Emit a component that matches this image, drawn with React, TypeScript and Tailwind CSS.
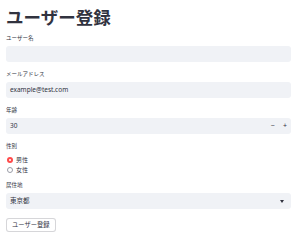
import React from "react";

const font = { fontFamily: '"Noto Sans", "Noto Sans CJK JP", sans-serif' };

function Label({ children }: { children: React.ReactNode }) {
  return <div className="h-[8px] text-[5.5px] leading-[8px] text-[#31333f]">{children}</div>;
}

export default function App() {
  return (
    <div className="w-[300px] h-[240px] bg-white pl-[6px] pr-[9px] pt-[5px] text-[#31333f]" style={font}>
      <h1 className="text-[17.5px] font-bold leading-[24px] text-[#31333f]">ユーザー登録</h1>
      <div className="mt-[5px]">
        <Label>ユーザー名</Label>
        <div className="mt-[4px] h-[16px] rounded-[3px] bg-[#f0f2f6]" />
      </div>
      <div className="mt-[8px]">
        <Label>メールアドレス</Label>
        <div className="mt-[4px] h-[16px] rounded-[3px] bg-[#f0f2f6] flex items-center px-[4px] text-[6.5px]">example@test.com</div>
      </div>
      <div className="mt-[8px]">
        <Label>年齢</Label>
        <div className="mt-[4px] h-[16px] rounded-[3px] bg-[#f0f2f6] flex items-center pl-[4px] text-[6.5px]">
          <span className="flex-1">30</span>
          <span className="w-[12px] text-center text-[7px]">−</span>
          <span className="w-[12px] text-center text-[7px]">+</span>
        </div>
      </div>
      <div className="mt-[8px]">
        <Label>性別</Label>
        <div className="mt-[5px] flex flex-col">
          <div className="h-[10px] flex items-center gap-[3px] pl-[1px]">
            <span className="w-[6px] h-[6px] rounded-full bg-[#ff4b4b] flex items-center justify-center">
              <span className="w-[2.5px] h-[2.5px] rounded-full bg-white" />
            </span>
            <span className="text-[6px]">男性</span>
          </div>
          <div className="h-[10px] flex items-center gap-[3px] pl-[1px]">
            <span className="w-[6px] h-[6px] rounded-full border-[0.7px] border-[#9a9ca6] bg-white" />
            <span className="text-[6px]">女性</span>
          </div>
        </div>
      </div>
      <div className="mt-[6px]">
        <Label>居住地</Label>
        <div className="mt-[4px] h-[16px] rounded-[3px] bg-[#f0f2f6] flex items-center px-[4px] text-[6.5px]">
          <span className="flex-1">東京都</span>
          <svg width="4" height="3" viewBox="0 0 4 3" className="mr-[3px]">
            <path d="M0 0 L4 0 L2 3 Z" fill="#31333f" />
          </svg>
        </div>
      </div>
      <button className="mt-[7px] h-[14px] px-[5px] rounded-[3px] border border-[rgba(49,51,63,0.2)] bg-white text-[6.3px] leading-[12px] text-[#31333f]">
        ユーザー登録
      </button>
    </div>
  );
}
